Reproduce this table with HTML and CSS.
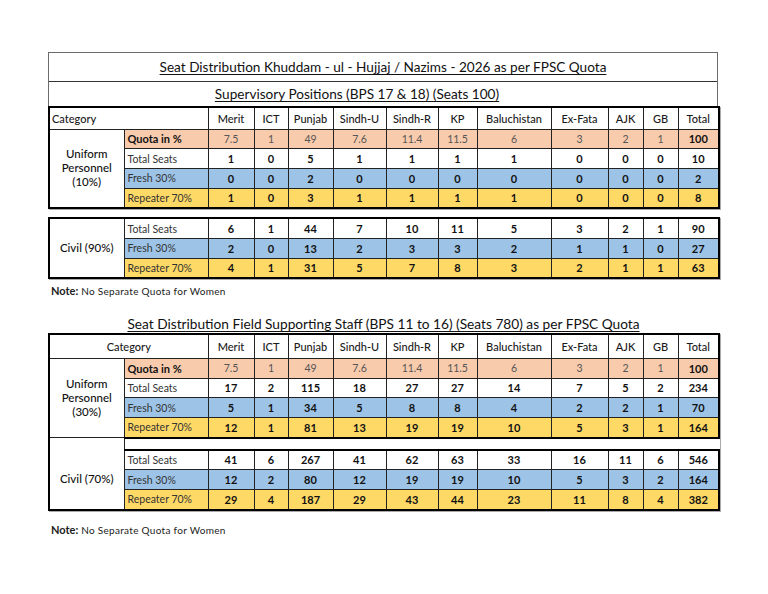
FILE: index.html
```html
<!DOCTYPE html>
<html>
<head>
<meta charset="utf-8">
<link rel="stylesheet" href="styles.css">
</head>
<body>
<div class="page">
  <div class="titlebox">
    <div class="t1"><span class="u">Seat Distribution Khuddam - ul - Hujjaj / Nazims - 2026 as per FPSC Quota</span></div>
    <div class="t2"><span class="u">Supervisory Positions (BPS 17 &amp; 18) (Seats 100)</span></div>
  </div>
  <table class="grid g1">
    <colgroup>
      <col class="c-cat"><col class="c-lab"><col class="c-merit"><col class="c-ict"><col class="c-pun"><col class="c-su"><col class="c-sr"><col class="c-kp"><col class="c-bal"><col class="c-fata"><col class="c-ajk"><col class="c-gb"><col class="c-tot">
    </colgroup>
    <tr class="hdr">
      <th colspan="2" class="left">Category</th>
      <th>Merit</th><th>ICT</th><th>Punjab</th><th>Sindh-U</th><th>Sindh-R</th><th>KP</th><th>Baluchistan</th><th>Ex-Fata</th><th>AJK</th><th>GB</th><th>Total</th>
    </tr>
    <tr class="quota">
      <td rowspan="4" class="cat">Uniform<br>Personnel<br>(10%)</td>
      <td class="lab qlab">Quota in %</td>
      <td>7.5</td><td>1</td><td>49</td><td>7.6</td><td>11.4</td><td>11.5</td><td>6</td><td>3</td><td>2</td><td>1</td><td class="b">100</td>
    </tr>
    <tr class="total">
      <td class="lab">Total Seats</td>
      <td>1</td><td>0</td><td>5</td><td>1</td><td>1</td><td>1</td><td>1</td><td>0</td><td>0</td><td>0</td><td>10</td>
    </tr>
    <tr class="fresh">
      <td class="lab">Fresh 30%</td>
      <td>0</td><td>0</td><td>2</td><td>0</td><td>0</td><td>0</td><td>0</td><td>0</td><td>0</td><td>0</td><td>2</td>
    </tr>
    <tr class="rep">
      <td class="lab">Repeater 70%</td>
      <td>1</td><td>0</td><td>3</td><td>1</td><td>1</td><td>1</td><td>1</td><td>0</td><td>0</td><td>0</td><td>8</td>
    </tr>
  </table>
  <table class="grid g1c">
    <colgroup>
      <col class="c-cat"><col class="c-lab"><col class="c-merit"><col class="c-ict"><col class="c-pun"><col class="c-su"><col class="c-sr"><col class="c-kp"><col class="c-bal"><col class="c-fata"><col class="c-ajk"><col class="c-gb"><col class="c-tot">
    </colgroup>
    <tr class="total">
      <td rowspan="3" class="cat">Civil (90%)</td>
      <td class="lab">Total Seats</td>
      <td>6</td><td>1</td><td>44</td><td>7</td><td>10</td><td>11</td><td>5</td><td>3</td><td>2</td><td>1</td><td>90</td>
    </tr>
    <tr class="fresh">
      <td class="lab">Fresh 30%</td>
      <td>2</td><td>0</td><td>13</td><td>2</td><td>3</td><td>3</td><td>2</td><td>1</td><td>1</td><td>0</td><td>27</td>
    </tr>
    <tr class="rep">
      <td class="lab">Repeater 70%</td>
      <td>4</td><td>1</td><td>31</td><td>5</td><td>7</td><td>8</td><td>3</td><td>2</td><td>1</td><td>1</td><td>63</td>
    </tr>
  </table>
  <p class="note note1"><span class="nb">Note:</span> No Separate Quota for Women</p>

  <h2 class="title2"><span class="u">Seat Distribution Field Supporting Staff (BPS 11 to 16) (Seats 780) as per FPSC Quota</span></h2>
  <table class="grid g2">
    <colgroup>
      <col class="c-cat"><col class="c-lab"><col class="c-merit"><col class="c-ict"><col class="c-pun"><col class="c-su"><col class="c-sr"><col class="c-kp"><col class="c-bal"><col class="c-fata"><col class="c-ajk"><col class="c-gb"><col class="c-tot">
    </colgroup>
    <tr class="hdr">
      <th colspan="2">Category</th>
      <th>Merit</th><th>ICT</th><th>Punjab</th><th>Sindh-U</th><th>Sindh-R</th><th>KP</th><th>Baluchistan</th><th>Ex-Fata</th><th>AJK</th><th>GB</th><th>Total</th>
    </tr>
    <tr class="quota">
      <td rowspan="4" class="cat">Uniform<br>Personnel<br>(30%)</td>
      <td class="lab qlab">Quota in %</td>
      <td>7.5</td><td>1</td><td>49</td><td>7.6</td><td>11.4</td><td>11.5</td><td>6</td><td>3</td><td>2</td><td>1</td><td class="b">100</td>
    </tr>
    <tr class="total">
      <td class="lab">Total Seats</td>
      <td>17</td><td>2</td><td>115</td><td>18</td><td>27</td><td>27</td><td>14</td><td>7</td><td>5</td><td>2</td><td>234</td>
    </tr>
    <tr class="fresh">
      <td class="lab">Fresh 30%</td>
      <td>5</td><td>1</td><td>34</td><td>5</td><td>8</td><td>8</td><td>4</td><td>2</td><td>2</td><td>1</td><td>70</td>
    </tr>
    <tr class="rep rep-last">
      <td class="lab">Repeater 70%</td>
      <td>12</td><td>1</td><td>81</td><td>13</td><td>19</td><td>19</td><td>10</td><td>5</td><td>3</td><td>1</td><td>164</td>
    </tr>
    <tr class="gap">
      <td class="cat gapcat"></td>
      <td colspan="12" class="gapfill"></td>
    </tr>
    <tr class="total">
      <td rowspan="3" class="cat civcat">Civil (70%)</td>
      <td class="lab">Total Seats</td>
      <td>41</td><td>6</td><td>267</td><td>41</td><td>62</td><td>63</td><td>33</td><td>16</td><td>11</td><td>6</td><td>546</td>
    </tr>
    <tr class="fresh">
      <td class="lab">Fresh 30%</td>
      <td>12</td><td>2</td><td>80</td><td>12</td><td>19</td><td>19</td><td>10</td><td>5</td><td>3</td><td>2</td><td>164</td>
    </tr>
    <tr class="rep">
      <td class="lab">Repeater 70%</td>
      <td>29</td><td>4</td><td>187</td><td>29</td><td>43</td><td>44</td><td>23</td><td>11</td><td>8</td><td>4</td><td>382</td>
    </tr>
  </table>
  <p class="note note2"><span class="nb">Note:</span> No Separate Quota for Women</p>
</div>
</body>
</html>
```
FILE: styles.css
```css
html, body {
  margin: 0;
  padding: 0;
  background: #fff;
}
body {
  font-family: "Lato", "Open Sans", sans-serif;
  color: #111;
}
.page {
  padding: 52px 0 0 48px;
}
.u {
  text-decoration: underline;
  text-underline-offset: 2px;
  text-decoration-thickness: 1px;
}
.titlebox {
  width: 668px;
  border: 1px solid #6b6b6b;
  border-bottom: none;
}
.t1 {
  height: 28px;
  display: flex;
  align-items: center;
  justify-content: center;
  font-size: 13.6px;
  border-bottom: 1px solid #333;
}
.t2 {
  height: 24px;
  display: flex;
  align-items: center;
  justify-content: center;
  padding-right: 52px;
  font-size: 13.6px;
}
.grid {
  width: 671px;
  table-layout: fixed;
  border-collapse: collapse;
  border: 2px solid #000;
  font-size: 11px;
  box-shadow: 1px 1px 0 #aaa;
}
.c-cat { width: 75px; }
.c-lab { width: 84px; }
.c-merit { width: 46px; }
.c-ict { width: 34px; }
.c-pun { width: 45px; }
.c-su { width: 53px; }
.c-sr { width: 52px; }
.c-kp { width: 39px; }
.c-bal { width: 74px; }
.c-fata { width: 57px; }
.c-ajk { width: 35px; }
.c-gb { width: 35px; }
.c-tot { width: 41px; }

.grid th, .grid td {
  border: 1px solid #222;
  padding: 0;
  text-align: center;
  vertical-align: middle;
  overflow: hidden;
  white-space: nowrap;
}
.grid th {
  font-weight: 500;
  font-size: 11px;
  color: #1a1a1a;
}
.grid th.left {
  text-align: left;
  padding-left: 2px;
}
.g1 .hdr th { height: 20.5px; }
.g2 .hdr th { height: 22.5px; }
.grid td { height: 18.7px; font-weight: 700; }
.grid td.cat {
  background: #fff;
  font-weight: 500;
  font-size: 11.5px;
  line-height: 14px;
  white-space: normal;
  color: #111;
}
.grid td.lab {
  text-align: left;
  padding-left: 3px;
  font-weight: 400;
  font-size: 10.5px;
  color: #333;
}
.grid td.qlab {
  font-weight: 700;
  font-size: 11px;
  color: #111;
}
.quota td { background: #f8cbad; font-weight: 400; color: #555; font-size: 10.5px; }
.quota td.b { font-weight: 700; color: #111; font-size: 11px; }
.total td { background: #fff; }
.fresh td { background: #9dc3e6; }
.rep td { background: #ffd966; }
.quota td.cat { background: #fff; }

.g1c {
  margin-top: 8px;
}
.rep-last td { border-bottom: 2px solid #000; }
.gap td { height: 10px; background: #fff; }
.gapcat { border-bottom: hidden !important; }
.gapfill {
  border-right: hidden !important;
  border-bottom: 2px solid #000 !important;
}

.note {
  margin: 0;
  font-size: 10px;
  letter-spacing: 0.3px;
  color: #222;
}
.note1 { padding: 5px 0 0 3px; }
.note2 { padding: 12px 0 0 3px; }
.nb {
  font-weight: 700;
  font-size: 11px;
  letter-spacing: 0;
}
.title2 {
  margin: 0;
  padding: 18px 0 1px 0;
  width: 671px;
  text-align: center;
  font-size: 13.7px;
  font-weight: 400;
}
```
